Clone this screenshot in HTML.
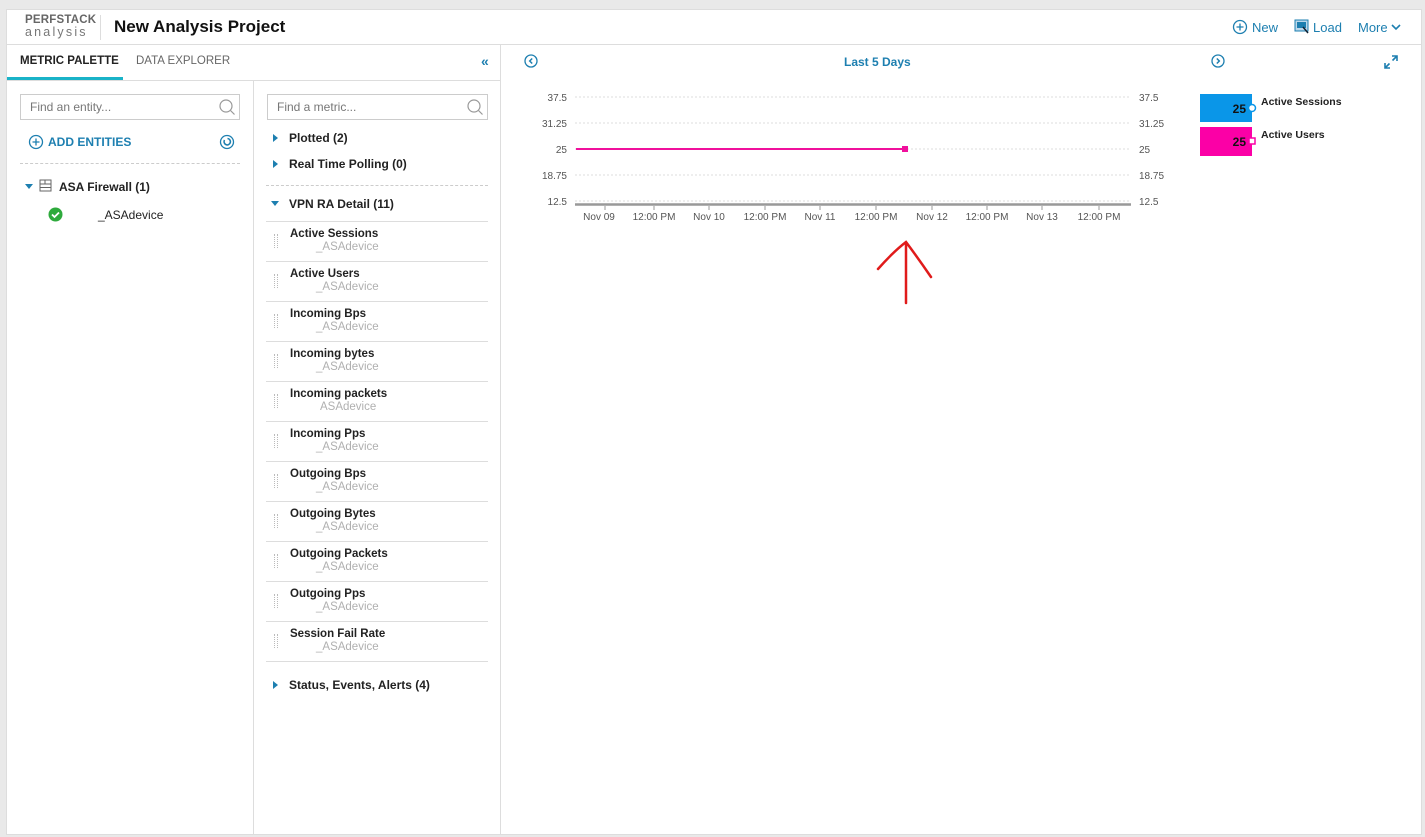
<!DOCTYPE html>
<html><head><meta charset="utf-8">
<style>
*{box-sizing:border-box;margin:0;padding:0}
body{width:1425px;height:837px;background:#e9e9e9;font-family:"Liberation Sans",sans-serif;position:relative;overflow:hidden;color:#222}
.card{position:absolute;left:6px;top:9px;width:1416px;height:826px;background:#fff;border:1px solid #ddd}
.a{position:absolute}
.blue{color:#1d7fb0}
.row{position:absolute;left:266px;width:222px;height:40px;border-top:1px solid #ddd}
.row b{position:absolute;left:24px;top:6px;font-size:11.5px;color:#222}
.row span{position:absolute;left:50px;top:19px;font-size:11.5px;color:#b0b0b0}
.row i{position:absolute;left:8px;top:12px;width:4px;height:14px;border-left:1px dotted #bbb;border-right:1px dotted #bbb}
.tri{position:absolute;width:0;height:0;border-top:4px solid transparent;border-bottom:4px solid transparent;border-left:5px solid #1d7fb0}
.trid{position:absolute;width:0;height:0;border-left:4px solid transparent;border-right:4px solid transparent;border-top:5px solid #1d7fb0}
.sec{position:absolute;font-size:12px;font-weight:bold;color:#222}
</style></head><body>
<div class="card"></div>
<div class="a" style="left:7px;top:44px;width:1414px;height:1px;background:#ddd"></div>
<div class="a" style="left:25px;top:14px;font-size:11.5px;font-weight:bold;color:#666;letter-spacing:0.2px">PERFSTACK</div>
<div class="a" style="left:25px;top:25px;font-size:12.5px;color:#777;letter-spacing:2.2px">analysis</div>
<div class="a" style="left:100px;top:15px;width:1px;height:25px;background:#ddd"></div>
<div class="a" style="left:114px;top:17px;font-size:17px;font-weight:bold;color:#111">New Analysis Project</div>
<svg class="a" style="left:1232px;top:19px" width="16" height="16"><circle cx="8" cy="8" r="6.5" fill="none" stroke="#1d7fb0" stroke-width="1.3"/><path d="M8 4.5v7M4.5 8h7" stroke="#1d7fb0" stroke-width="1.3"/></svg>
<div class="a blue" style="left:1252px;top:20px;font-size:13px">New</div>
<svg class="a" style="left:1294px;top:19px" width="16" height="16"><rect x="1" y="1" width="13" height="11" fill="#bcd7ea" stroke="#1d7fb0"/><rect x="3" y="3" width="9" height="6" fill="#1d7fb0"/><path d="M9 8l5 6" stroke="#123" stroke-width="1.5"/></svg>
<div class="a blue" style="left:1313px;top:20px;font-size:13px">Load</div>
<div class="a blue" style="left:1358px;top:20px;font-size:13px">More</div>
<svg class="a" style="left:1391px;top:23px" width="10" height="8"><path d="M1 2l4 4 4-4" fill="none" stroke="#1d7fb0" stroke-width="1.6"/></svg>
<div class="a" style="left:7px;top:80px;width:494px;height:1px;background:#ddd"></div>
<div class="a" style="left:20px;top:55px;font-size:11.5px;font-weight:bold;color:#222">METRIC PALETTE</div>
<div class="a" style="left:7px;top:77px;width:116px;height:3px;background:#19b3c8"></div>
<div class="a" style="left:136px;top:55px;font-size:11.5px;color:#666">DATA EXPLORER</div>
<div class="a blue" style="left:481px;top:53px;font-size:14px;font-weight:bold">«</div>
<div class="a" style="left:253px;top:81px;width:1px;height:753px;background:#ddd"></div>
<div class="a" style="left:500px;top:45px;width:1px;height:789px;background:#ddd"></div>
<div class="a" style="left:20px;top:94px;width:220px;height:26px;border:1px solid #ccc"></div>
<div class="a" style="left:30px;top:100px;font-size:12px;color:#777">Find an entity...</div>
<svg class="a" style="left:218px;top:98px" width="18" height="18"><circle cx="8" cy="8" r="6" fill="none" stroke="#999" stroke-width="1.2"/><path d="M12.5 12.5l4 4" stroke="#999" stroke-width="1.2"/></svg>
<svg class="a" style="left:28px;top:134px" width="16" height="16"><circle cx="8" cy="8" r="6.5" fill="none" stroke="#1d7fb0" stroke-width="1.3"/><path d="M8 4.5v7M4.5 8h7" stroke="#1d7fb0" stroke-width="1.3"/></svg>
<div class="a blue" style="left:48px;top:135px;font-size:12px;font-weight:bold">ADD ENTITIES</div>
<svg class="a" style="left:219px;top:134px" width="16" height="16"><circle cx="8" cy="8" r="6.5" fill="none" stroke="#1d7fb0" stroke-width="1.3"/><path d="M5.5 6a3.2 3.2 0 1 0 3-1.5" fill="none" stroke="#1d7fb0" stroke-width="1.6"/></svg>
<div class="a" style="left:20px;top:163px;width:220px;border-top:1px dashed #ccc"></div>
<div class="trid" style="left:25px;top:184px"></div>
<svg class="a" style="left:39px;top:179px" width="14" height="14"><rect x="1" y="1" width="11" height="11" fill="none" stroke="#666"/><path d="M1 5h11M1 8.5h11M6 1v4" stroke="#666"/></svg>
<div class="sec" style="left:59px;top:180px">ASA Firewall (1)</div>
<svg class="a" style="left:48px;top:207px" width="15" height="15"><circle cx="7.5" cy="7.5" r="7" fill="#2eaa3c"/><path d="M4 7.5l2.5 2.5 4.5-4.5" fill="none" stroke="#fff" stroke-width="1.8"/></svg>
<div class="a" style="left:98px;top:208px;font-size:12px;color:#222">_ASAdevice</div>
<div class="a" style="left:267px;top:94px;width:221px;height:26px;border:1px solid #ccc"></div>
<div class="a" style="left:277px;top:100px;font-size:12px;color:#777">Find a metric...</div>
<svg class="a" style="left:466px;top:98px" width="18" height="18"><circle cx="8" cy="8" r="6" fill="none" stroke="#999" stroke-width="1.2"/><path d="M12.5 12.5l4 4" stroke="#999" stroke-width="1.2"/></svg>
<div class="tri" style="left:273px;top:134px"></div>
<div class="sec" style="left:289px;top:131px">Plotted (2)</div>
<div class="tri" style="left:273px;top:160px"></div>
<div class="sec" style="left:289px;top:157px">Real Time Polling (0)</div>
<div class="a" style="left:266px;top:185px;width:222px;border-top:1px dashed #ccc"></div>
<div class="trid" style="left:271px;top:201px"></div>
<div class="sec" style="left:289px;top:197px">VPN RA Detail (11)</div>
<div class="row" style="top:221px"><i></i><b>Active Sessions</b><span>_ASAdevice</span></div>
<div class="row" style="top:261px"><i></i><b>Active Users</b><span>_ASAdevice</span></div>
<div class="row" style="top:301px"><i></i><b>Incoming Bps</b><span>_ASAdevice</span></div>
<div class="row" style="top:341px"><i></i><b>Incoming bytes</b><span>_ASAdevice</span></div>
<div class="row" style="top:381px"><i></i><b>Incoming packets</b><span style="left:54px">ASAdevice</span></div>
<div class="row" style="top:421px"><i></i><b>Incoming Pps</b><span>_ASAdevice</span></div>
<div class="row" style="top:461px"><i></i><b>Outgoing Bps</b><span>_ASAdevice</span></div>
<div class="row" style="top:501px"><i></i><b>Outgoing Bytes</b><span>_ASAdevice</span></div>
<div class="row" style="top:541px"><i></i><b>Outgoing Packets</b><span>_ASAdevice</span></div>
<div class="row" style="top:581px"><i></i><b>Outgoing Pps</b><span>_ASAdevice</span></div>
<div class="row" style="top:621px"><i></i><b>Session Fail Rate</b><span>_ASAdevice</span></div>
<div class="a" style="left:266px;top:661px;width:222px;height:1px;background:#ddd"></div>
<div class="tri" style="left:273px;top:681px"></div>
<div class="sec" style="left:289px;top:678px">Status, Events, Alerts (4)</div>
<svg class="a" style="left:524px;top:54px" width="16" height="16"><circle cx="7" cy="7" r="6" fill="none" stroke="#1d7fb0" stroke-width="1.3"/><path d="M8.2 4.5L5.7 7l2.5 2.5" fill="none" stroke="#1d7fb0" stroke-width="1.5"/></svg>
<div class="a blue" style="left:844px;top:55px;font-size:12px;font-weight:bold">Last 5 Days</div>
<svg class="a" style="left:1211px;top:54px" width="16" height="16"><circle cx="7" cy="7" r="6" fill="none" stroke="#1d7fb0" stroke-width="1.3"/><path d="M5.8 4.5L8.3 7 5.8 9.5" fill="none" stroke="#1d7fb0" stroke-width="1.5"/></svg>
<svg class="a" style="left:1383px;top:54px" width="16" height="16"><path d="M9 2h5v5M14 2l-4.5 4.5M7 14H2V9M2 14l4.5-4.5" fill="none" stroke="#1d7fb0" stroke-width="1.6"/></svg>
<svg class="a" style="left:0;top:0" width="1425" height="837" font-family="Liberation Sans, sans-serif" font-size="10" fill="#555">
<g stroke="#ddd" stroke-dasharray="2,2" stroke-width="1">
<line x1="575" y1="97" x2="1130" y2="97"/><line x1="575" y1="123" x2="1130" y2="123"/><line x1="575" y1="149" x2="1130" y2="149"/><line x1="575" y1="175" x2="1130" y2="175"/><line x1="575" y1="201" x2="1130" y2="201"/>
</g>
<g text-anchor="end"><text x="567" y="101">37.5</text><text x="567" y="127">31.25</text><text x="567" y="153">25</text><text x="567" y="179">18.75</text><text x="567" y="205">12.5</text></g>
<g><text x="1139" y="101">37.5</text><text x="1139" y="127">31.25</text><text x="1139" y="153">25</text><text x="1139" y="179">18.75</text><text x="1139" y="205">12.5</text></g>
<line x1="575" y1="204.5" x2="1131" y2="204.5" stroke="#999" stroke-width="2.5"/>
<g stroke="#999"><line x1="605" y1="206" x2="605" y2="210"/><line x1="654" y1="206" x2="654" y2="210"/><line x1="709" y1="206" x2="709" y2="210"/><line x1="765" y1="206" x2="765" y2="210"/><line x1="820" y1="206" x2="820" y2="210"/><line x1="876" y1="206" x2="876" y2="210"/><line x1="932" y1="206" x2="932" y2="210"/><line x1="987" y1="206" x2="987" y2="210"/><line x1="1042" y1="206" x2="1042" y2="210"/><line x1="1099" y1="206" x2="1099" y2="210"/></g>
<g text-anchor="middle"><text x="599" y="220">Nov 09</text><text x="654" y="220">12:00 PM</text><text x="709" y="220">Nov 10</text><text x="765" y="220">12:00 PM</text><text x="820" y="220">Nov 11</text><text x="876" y="220">12:00 PM</text><text x="932" y="220">Nov 12</text><text x="987" y="220">12:00 PM</text><text x="1042" y="220">Nov 13</text><text x="1099" y="220">12:00 PM</text></g>
<line x1="576" y1="149" x2="904" y2="149" stroke="#f0109c" stroke-width="2"/>
<rect x="902" y="146" width="6" height="6" fill="#f0109c"/>
<path d="M878 269Q893 252 906 242Q918 258 931 277M906 243L906 303" fill="none" stroke="#e01b1b" stroke-width="2.5" stroke-linecap="round"/>
<rect x="1200" y="94" width="52" height="28" fill="#0a96e8"/>
<rect x="1200" y="127" width="52" height="29" fill="#fb00a6"/>
<circle cx="1252" cy="108" r="3.5" fill="#fff" stroke="#0a96e8" stroke-width="1.5"/>
<rect x="1249" y="138" width="6" height="6" fill="#fff" stroke="#fb00a6" stroke-width="1.5"/>
<g font-size="12" font-weight="bold" fill="#111" text-anchor="end"><text x="1246" y="113">25</text><text x="1246" y="146">25</text></g>
<g font-size="10.5" font-weight="bold" fill="#222"><text x="1261" y="105">Active Sessions</text><text x="1261" y="138">Active Users</text></g>
</svg>
</body></html>
